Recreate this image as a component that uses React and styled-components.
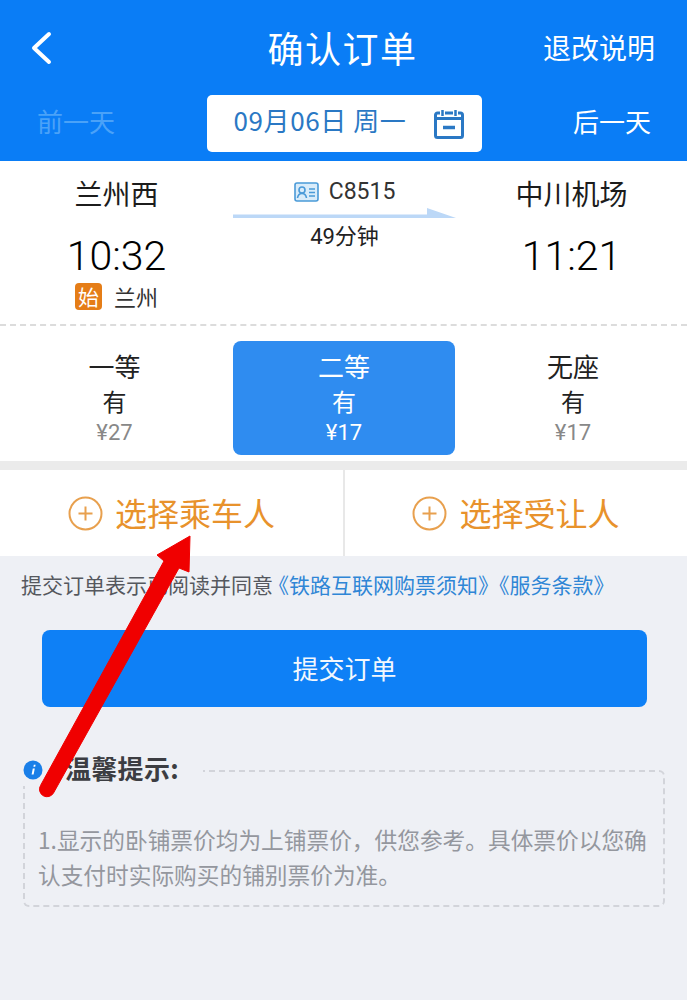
import React from "react";
import styled, { createGlobalStyle } from "styled-components";

const Global = createGlobalStyle`
  html, body { margin: 0; padding: 0; background: #eef0f5; }
  body { font-family: "Noto Sans CJK SC", "Noto Sans", sans-serif; }
`;
const Page = styled.div`
  position: relative; width: 687px; height: 1000px; overflow: hidden; background: #eef0f5;
`;
const Header = styled.header`
  background: #0a7df6; height: 161px; box-sizing: border-box; color: #fff; padding-top: 22px;
`;
const TitleRow = styled.div`
  display: grid; grid-template-columns: 150px 1fr 150px; align-items: center; height: 50px; padding: 0 32px 0 30px;
`;
const Back = styled.svg`
  width: 24px; height: 36px; display: block;
`;
const Title = styled.h1`
  margin: 0; text-align: center; font-size: 36px; font-weight: 400; line-height: 50px; letter-spacing: 1.5px;
`;
const HelpLink = styled.div`
  text-align: right; font-size: 28px; line-height: 50px; white-space: nowrap;
`;
const DateRow = styled.div`
  display: flex; align-items: center; justify-content: space-between; margin-top: 23px; padding: 0 36px 0 37px;
`;
const DayLink = styled.div`
  font-size: 26px; line-height: 50px; padding-bottom: 6px; color: ${p => (p.$muted ? "#4aa2f8" : "#fff")};
`;
const DateBox = styled.div`
  width: 275px; height: 57px; box-sizing: border-box; background: #fff; border-radius: 5px; display: flex; align-items: center;
  justify-content: space-between; padding: 0 18px 0 27px; color: #2a78c4; font-size: 26px; letter-spacing: 0.6px; white-space: nowrap;
`;
const DateText = styled.span`
  display: block; line-height: 50px; padding-bottom: 7px;
`;
const CalendarIcon = styled.svg`
  width: 30px; height: 30px; display: block;
`;
const TrainInfo = styled.section`
  background: #fff; height: 165px; box-sizing: border-box; display: grid; grid-template-columns: 233px 223px 1fr;
  border-bottom: 2px dashed #dcdcdc;
`;
const Station = styled.div`
  display: flex; flex-direction: column; align-items: center; padding-top: 12px;
`;
const StationName = styled.div`
  font-size: 28px; line-height: 40px; color: #1c1c1c;
`;
const Time = styled.div`
  font-family: "Roboto", sans-serif; font-weight: 300; font-size: 41px; line-height: 48px; margin-top: 19px; color: #000;
`;
const OriginRow = styled.div`
  display: flex; align-items: center; gap: 12px; margin-top: 1px; font-size: 22px; line-height: 30px; color: #333;
`;
const OriginBadge = styled.span`
  width: 27px; height: 27px; background: #e57d17; color: #fff; border-radius: 4px; font-size: 21px;
  display: flex; align-items: center; justify-content: center; line-height: 1;
`;
const Middle = styled.div`
  display: flex; flex-direction: column; align-items: center; padding-top: 15px;
`;
const TrainNo = styled.div`
  display: flex; align-items: center; gap: 10px; font-family: "Roboto", sans-serif; font-size: 23px; line-height: 32px; color: #333;
`;
const TrainIcon = styled.svg`
  width: 25px; height: 20px; display: block;
`;
const LineArrow = styled.svg`
  width: 223px; height: 12px; display: block;
`;
const Duration = styled.div`
  font-size: 22px; line-height: 30px; margin-top: 2px; color: #222; font-family: "Roboto", "Noto Sans CJK SC", sans-serif;
`;
const Seats = styled.section`
  background: #fff; height: 135px; box-sizing: border-box; display: grid; grid-template-columns: 229px 222px 1fr; column-gap: 4px;
  padding-top: 15px; align-items: start;
`;
const Seat = styled.div`
  height: 114px; box-sizing: border-box; padding-top: 8px; border-radius: 8px; text-align: center;
  background: ${p => (p.$active ? "#2f8cf0" : "transparent")}; color: ${p => (p.$active ? "#fff" : "#222")};
`;
const SeatName = styled.div`
  font-size: 26px; line-height: 34px;
`;
const SeatAvail = styled.div`
  font-size: 24px; line-height: 34px; margin-top: 1px; color: ${p => (p.$active ? "#fff" : "#222")};
`;
const SeatPrice = styled.div`
  font-family: "Roboto", sans-serif; font-size: 22px; line-height: 28px; margin-top: 1px; color: ${p => (p.$active ? "#fff" : "#888")};
`;
const Pickers = styled.section`
  height: 95px; box-sizing: border-box; border-top: 9px solid #ebebeb; background: #fff; display: grid; grid-template-columns: 343px 1fr;
`;
const Picker = styled.div`
  display: flex; align-items: center; justify-content: center; gap: 12px; color: #e8922c; font-size: 32px; line-height: 84px; padding-bottom: 2px; box-sizing: border-box;
  border-left: ${p => (p.$divided ? "2px solid #e8e8e8" : "none")};
`;
const PlusIcon = styled.svg`
  width: 35px; height: 35px; display: block; flex: none; margin-top: 2px;
`;
const Terms = styled.p`
  margin: 14px 0 0 21px; font-size: 21px; line-height: 28px; color: #55585e; white-space: nowrap;
`;
const TermsLink = styled.span`
  color: #2f86d6; margin-left: -5px;
`;
const Submit = styled.button`
  display: block; width: 605px; height: 77px; margin: 32px 0 0 42px; padding: 0 0 3px; border: 0; border-radius: 8px; background: #0e80f6; color: #f2f7fd;
  font: 400 26px "Noto Sans CJK SC", sans-serif;
`;
const Tips = styled.section`
  position: relative; margin: 63px 22px 0 23px; height: 137px; box-sizing: border-box; border: 2px dashed #d2d4da; border-radius: 6px; padding: 50px 12px 0 13px;
  color: #94979e; font-size: 22.7px; line-height: 35px;
`;
const TipsHead = styled.div`
  position: absolute; left: -2px; top: -20px; padding-right: 24px; height: 34px; background: #eef0f5; display: flex; align-items: center; gap: 22px;
  font-size: 26px; font-weight: 700; color: #3c3d42; line-height: 34px; letter-spacing: 0.3px;
`;
const InfoDot = styled.svg`
  width: 20px; height: 20px; display: block; margin-top: 2px;
`;
const TipsTitle = styled.span`
  display: block; margin-top: -2px;
`;
const PointerLayer = styled.svg`
  position: absolute; left: 0; top: 0; width: 687px; height: 1000px; pointer-events: none;
`;

const PlusCircle = () => (
  <PlusIcon viewBox="0 0 35 35" fill="none" stroke="#e8a04e" strokeWidth="2">
    <circle cx="17.5" cy="17.5" r="16" />
    <path d="M17.5 10.5v14M10.5 17.5h14" />
  </PlusIcon>
);

const SEATS = [
  { name: "一等", price: "¥27" },
  { name: "二等", price: "¥17", active: true },
  { name: "无座", price: "¥17" },
];

export default function App() {
  return (
    <Page>
      <Global />
      <Header>
        <TitleRow>
          <Back viewBox="0 0 24 36" fill="none" stroke="#fff" strokeWidth="4" strokeLinecap="round" strokeLinejoin="round">
            <path d="M19 5 4 19l15 14" />
          </Back>
          <Title>确认订单</Title>
          <HelpLink>退改说明</HelpLink>
        </TitleRow>
        <DateRow>
          <DayLink $muted>前一天</DayLink>
          <DateBox>
            <DateText>09月06日 周一</DateText>
            <CalendarIcon viewBox="0 0 30 30" fill="none" stroke="#2a78c4" strokeWidth="3">
              <path d="M6 4H3.500a2 2 0 0 0-2 2v20.500a2 2 0 0 0 2 2h23a2 2 0 0 0 2-2V6a2 2 0 0 0-2-2H24M11 4h8" />
              <path d="M1.500 9.500h27" strokeWidth="3" />
              <path d="M8.500 1v6M21.500 1v6" strokeWidth="2.500" />
              <path d="M9 18.500h12" strokeWidth="3.500" />
            </CalendarIcon>
          </DateBox>
          <DayLink>后一天</DayLink>
        </DateRow>
      </Header>
      <TrainInfo>
        <Station>
          <StationName>兰州西</StationName>
          <Time>10:32</Time>
          <OriginRow><OriginBadge>始</OriginBadge>兰州</OriginRow>
        </Station>
        <Middle>
          <TrainNo>
            <TrainIcon viewBox="0 0 25 20" fill="#d9ecfa" stroke="#4a9ad8" strokeWidth="1.6">
              <rect x="1" y="1" width="23" height="18" rx="2" />
              <circle cx="8" cy="8" r="3" fill="none" />
              <path d="M3.500 16c.5-3.500 2-4.500 4.500-4.500s4 1 4.500 4.500M15 7h6M15 10.500h6M15 14h6" fill="none" />
            </TrainIcon>
            C8515
          </TrainNo>
          <LineArrow viewBox="0 0 223 12">
            <path d="M0 6.500h194V0l29 10H0z" fill="#bcd8f7" />
          </LineArrow>
          <Duration>49分钟</Duration>
        </Middle>
        <Station>
          <StationName>中川机场</StationName>
          <Time>11:21</Time>
        </Station>
      </TrainInfo>
      <Seats>
        {SEATS.map(s => (
          <Seat key={s.name} $active={s.active}>
            <SeatName>{s.name}</SeatName>
            <SeatAvail $active={s.active}>有</SeatAvail>
            <SeatPrice $active={s.active}>{s.price}</SeatPrice>
          </Seat>
        ))}
      </Seats>
      <Pickers>
        <Picker><PlusCircle />选择乘车人</Picker>
        <Picker $divided><PlusCircle />选择受让人</Picker>
      </Pickers>
      <Terms>提交订单表示已阅读并同意<TermsLink>《铁路互联网购票须知》《服务条款》</TermsLink></Terms>
      <Submit>提交订单</Submit>
      <Tips>
        <TipsHead>
          <InfoDot viewBox="0 0 20 20">
            <circle cx="10" cy="10" r="9.500" fill="#1a7fe8" />
            <path d="M10.800 4.800h1.800l-.4 2h-1.800zM9.800 8.500h2l-1.200 6h-2z" fill="#fff" />
          </InfoDot>
          <TipsTitle>温馨提示:</TipsTitle>
        </TipsHead>
        1.显示的卧铺票价均为上铺票价，供您参考。具体票价以您确认支付时实际购买的铺别票价为准。
      </Tips>
      <PointerLayer viewBox="0 0 687 1000">
        <path d="M190 536 157 555 164 561 40.500 785.500a7.500 7.500 0 0 0 13 7.500L179 568 189 572z" fill="#f00000" stroke="#f00000" strokeWidth="1" strokeLinejoin="round" />
      </PointerLayer>
    </Page>
  );
}
